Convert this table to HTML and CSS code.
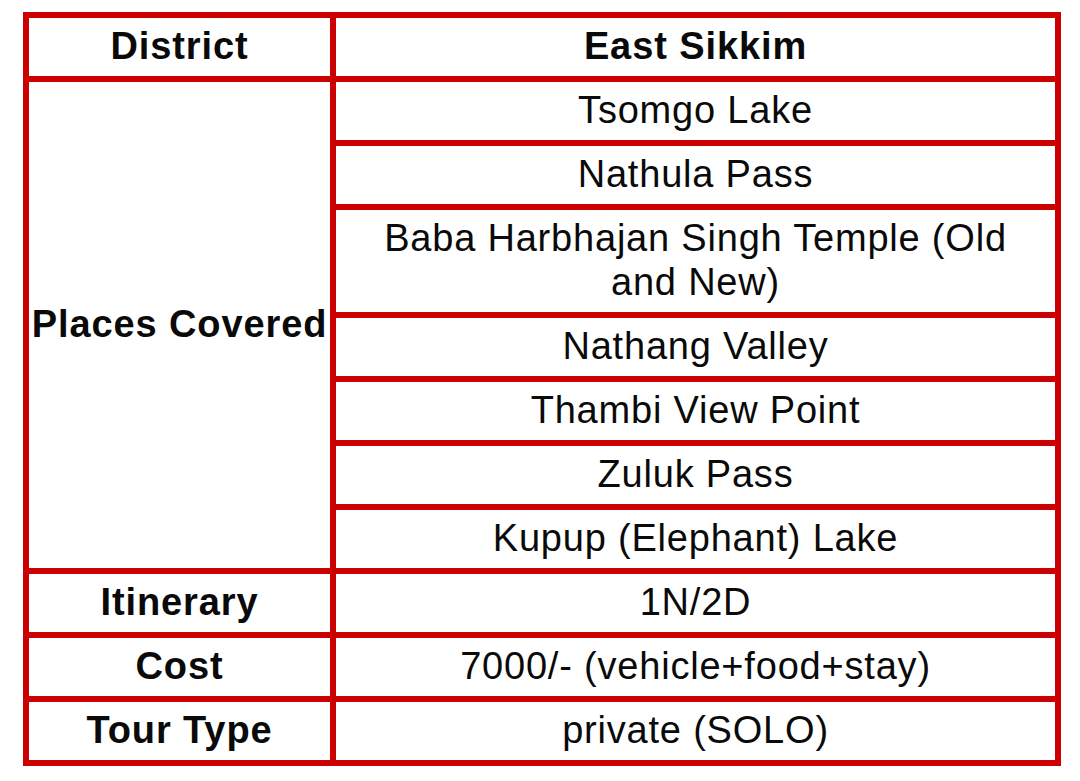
FILE: index.html
```html
<!DOCTYPE html>
<html lang="en">
<head>
<meta charset="utf-8">
<title>East Sikkim Tour</title>
<link rel="stylesheet" href="styles.css">
</head>
<body>
<table class="tour">
  <colgroup>
    <col class="col-label">
    <col class="col-value">
  </colgroup>
  <tbody>
    <tr>
      <th class="label">District</th>
      <th class="value head">East Sikkim</th>
    </tr>
    <tr>
      <th class="label" rowspan="7">Places Covered</th>
      <td class="value">Tsomgo Lake</td>
    </tr>
    <tr><td class="value">Nathula Pass</td></tr>
    <tr><td class="value wrap">Baba Harbhajan Singh Temple (Old and New)</td></tr>
    <tr><td class="value">Nathang Valley</td></tr>
    <tr><td class="value">Thambi View Point</td></tr>
    <tr><td class="value">Zuluk Pass</td></tr>
    <tr><td class="value">Kupup (Elephant) Lake</td></tr>
    <tr>
      <th class="label">Itinerary</th>
      <td class="value">1N/2D</td>
    </tr>
    <tr>
      <th class="label">Cost</th>
      <td class="value">7000/- (vehicle+food+stay)</td>
    </tr>
    <tr>
      <th class="label">Tour Type</th>
      <td class="value">private (SOLO)</td>
    </tr>
  </tbody>
</table>
</body>
</html>
```

FILE: styles.css
```css
html, body {
  margin: 0;
  padding: 0;
  background: #ffffff;
}

body {
  padding: 12px 0 0 23px;
  font-family: "Liberation Sans", Arial, sans-serif;
  color: #0a0a0a;
}

.tour {
  border-collapse: collapse;
  table-layout: fixed;
  width: 1038px;
  border: 6px solid #cc0000;
}

.col-label {
  width: 307px;
}

.tour th,
.tour td {
  border: 6px solid #cc0000;
  text-align: center;
  vertical-align: middle;
  font-size: 38px;
  letter-spacing: 0.8px;
  line-height: 44px;
  padding: 6px 2px 8px 2px;
  white-space: nowrap;
}

.tour th {
  font-weight: bold;
  letter-spacing: 0.9px;
}

.tour td.wrap {
  white-space: normal;
  line-height: 44px;
  padding: 6px 24px 8px 24px;
}
```
